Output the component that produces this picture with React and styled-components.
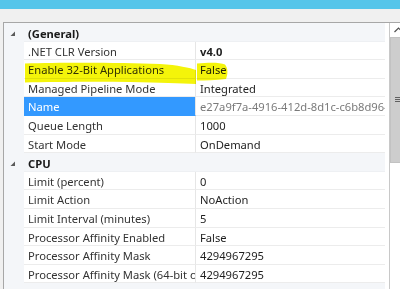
import React from "react";
import styled, { createGlobalStyle } from "styled-components";

const Global = createGlobalStyle`
  html, body { margin: 0; padding: 0; background: #f0f0f0; }
  body { font-family: "Noto Sans", "Open Sans", sans-serif; }
  #root { width: 400px; height: 289px; overflow: hidden; }
`;

const Screen = styled.div`
  position: relative;
  width: 400px;
  height: 289px;
  overflow: hidden;
  background: #f0f0f0;
  display: flex;
  flex-direction: column;
`;

const TitleBand = styled.div`
  height: 9px;
  flex: none;
  background: #56c5ea;
`;

const Gap = styled.div`
  height: 13px;
  flex: none;
  background: #f0f0f0;
`;

const Panel = styled.div`
  margin-left: 3px;
  width: 414px;
  flex: 1;
  display: flex;
  border-top: 1px solid #a7a7a7;
  border-left: 1px solid #a7a7a7;
  background: #fff;
  overflow: hidden;
`;

const Grid = styled.div`
  width: 381px;
  flex: none;
  display: flex;
  flex-direction: column;
  background: #fff;
`;

const Row = styled.div`
  display: flex;
  height: 18.6px;
  flex: none;
  box-sizing: border-box;
  font-size: 11.2px;
  color: ${(p) => (p.$category ? "#1a1a1a" : "#333")};
  background: ${(p) => (p.$category ? "#f4f6f9" : "#fff")};
`;

const Gutter = styled.div`
  width: 20px;
  flex: none;
  background: #f4f6f9;
  display: flex;
  align-items: center;
  justify-content: flex-end;
  padding-right: 8px;
  box-sizing: border-box;
`;

const CategoryLabel = styled.div`
  flex: 1;
  font-weight: 700;
  padding-left: 4px;
  line-height: 17px;
  padding-top: 2px;
  border-bottom: 1px solid #eef0f3;
  box-sizing: border-box;
  white-space: nowrap;
`;

const NameCell = styled.div`
  width: 172px;
  flex: none;
  box-sizing: border-box;
  padding-left: 4px;
  padding-top: 1px;
  line-height: 17px;
  white-space: nowrap;
  overflow: hidden;
  border-right: 1px solid #e6e6e6;
  border-bottom: 1px solid ${(p) => (p.$selected ? "#3399ff" : "#ececec")};
  background: ${(p) => (p.$selected ? "#3399ff" : "transparent")};
  color: ${(p) => (p.$selected ? "#fff" : "inherit")};
`;

const ValueCell = styled.div`
  flex: 1;
  min-width: 0;
  box-sizing: border-box;
  padding-left: 4px;
  padding-top: 1px;
  line-height: 17px;
  white-space: nowrap;
  overflow: hidden;
  border-bottom: 1px solid #ececec;
  font-weight: ${(p) => (p.$bold ? 700 : 400)};
  color: ${(p) => (p.$muted ? "#7a7a7a" : "#1e1e1e")};
`;

const Spacer = styled.div`
  width: 4px;
  flex: none;
  background: #fff;
`;

const ScrollBar = styled.div`
  width: 17px;
  flex: none;
  border-left: 1px solid #c8c8c8;
  background: #fff;
  display: flex;
  flex-direction: column;
`;

const ArrowButton = styled.div`
  height: 14px;
  flex: none;
  display: flex;
  align-items: center;
  justify-content: center;
  background: #fff;
`;

const Thumb = styled.div`
  height: 126px;
  flex: none;
  background: #cdcdcd;
  border: 1px solid #c2c2c2;
  box-sizing: border-box;
  display: flex;
  align-items: center;
  justify-content: center;
`;

const Overlay = styled.svg`
  position: absolute;
  left: 0;
  top: 0;
  pointer-events: none;
  mix-blend-mode: multiply;
`;

const Expander = () => (
  <svg width="6" height="6" viewBox="0 0 6 6" style={{ marginTop: 3 }}>
    <polygon points="5,0.5 5,5 0.5,5" fill="#5a5a5a" />
  </svg>
);

const rows = [
  { type: "cat", label: "(General)" },
  { name: ".NET CLR Version", value: "v4.0", bold: true },
  { name: "Enable 32-Bit Applications", value: "False" },
  { name: "Managed Pipeline Mode", value: "Integrated" },
  { name: "Name", value: "e27a9f7a-4916-412d-8d1c-c6b8d9644b21", selected: true, muted: true },
  { name: "Queue Length", value: "1000" },
  { name: "Start Mode", value: "OnDemand" },
  { type: "cat", label: "CPU" },
  { name: "Limit (percent)", value: "0" },
  { name: "Limit Action", value: "NoAction" },
  { name: "Limit Interval (minutes)", value: "5" },
  { name: "Processor Affinity Enabled", value: "False" },
  { name: "Processor Affinity Mask", value: "4294967295" },
  { name: "Processor Affinity Mask (64-bit option)", value: "4294967295" },
  { type: "cat", label: "" },
];

export default function App() {
  return (
    <>
      <Global />
      <Screen>
        <TitleBand />
        <Gap />
        <Panel>
          <Grid>
            {rows.map((r, i) =>
              r.type === "cat" ? (
                <Row key={i} $category>
                  <Gutter>{r.label ? <Expander /> : null}</Gutter>
                  <CategoryLabel>{r.label}</CategoryLabel>
                </Row>
              ) : (
                <Row key={i}>
                  <Gutter />
                  <NameCell $selected={r.selected}>{r.name}</NameCell>
                  <ValueCell $bold={r.bold} $muted={r.muted}>
                    {r.value}
                  </ValueCell>
                </Row>
              )
            )}
          </Grid>
          <Spacer />
          <ScrollBar>
            <ArrowButton>
              <svg width="9" height="6" viewBox="0 0 9 6">
                <polyline points="0.5,5 4.5,1 8.5,5" fill="none" stroke="#505050" strokeWidth="1.2" />
              </svg>
            </ArrowButton>
            <Thumb>
              <svg width="8" height="6" viewBox="0 0 8 6">
                <line x1="0" y1="0.5" x2="8" y2="0.5" stroke="#606060" strokeWidth="1" />
                <line x1="0" y1="2.5" x2="8" y2="2.5" stroke="#606060" strokeWidth="1" />
                <line x1="0" y1="4.5" x2="8" y2="4.5" stroke="#606060" strokeWidth="1" />
              </svg>
            </Thumb>
          </ScrollBar>
        </Panel>
        <Overlay width="400" height="289" viewBox="0 0 400 289">
          <path
            d="M25,63.5 C60,62.5 120,62.5 160,64 C178,65 190,68 196,70 L196,84 C180,83.5 160,82.5 130,82 C90,81.5 50,82 25,82.5 Z"
            fill="#f4f40a"
          />
          <path
            d="M197,63.5 C210,62.5 220,62.5 225,64.5 C228,68 228,74 226,79 C216,80 205,80.5 197,80.5 Z"
            fill="#f4f40a"
          />
        </Overlay>
      </Screen>
    </>
  );
}
